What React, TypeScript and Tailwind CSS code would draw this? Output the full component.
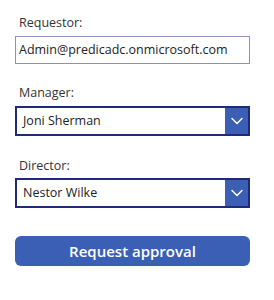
import { ChevronDown } from 'lucide-react'

function Label({ children }: { children: string }) {
  return <div className="pl-1 text-[12.5px] leading-[18px] text-[#333]">{children}</div>
}

function Dropdown({ value }: { value: string }) {
  return (
    <div className="flex h-[30px] border-2 border-[#1f2a7a] bg-white">
      <div className="flex flex-1 items-center pl-[6px] text-[12.5px] text-[#222]">{value}</div>
      <div className="flex w-[23px] items-center justify-center bg-[#3a5fb4]">
        <ChevronDown size={20} color="white" strokeWidth={1.75} />
      </div>
    </div>
  )
}

export default function App() {
  return (
    <div className="bg-white pl-[15px] pt-[14px]" style={{ fontFamily: '"Open Sans", sans-serif' }}>
      <div className="flex w-[235px] flex-col">
        <Label>Requestor:</Label>
        <div className="mt-[4px] flex h-[28px] items-center border border-[#8b90c4] pl-[3px] text-[12.5px] text-[#222]">
          Admin@predicadc.onmicrosoft.com
        </div>
        <div className="mt-[20px]">
          <Label>Manager:</Label>
        </div>
        <div className="mt-[4px]">
          <Dropdown value="Joni Sherman" />
        </div>
        <div className="mt-[21px]">
          <Label>Director:</Label>
        </div>
        <div className="mt-[3px]">
          <Dropdown value="Nestor Wilke" />
        </div>
        <button className="mt-[28px] h-[30px] rounded-[6px] bg-[#3a5fb4] text-[15px] font-semibold text-white">
          Request approval
        </button>
      </div>
    </div>
  )
}
